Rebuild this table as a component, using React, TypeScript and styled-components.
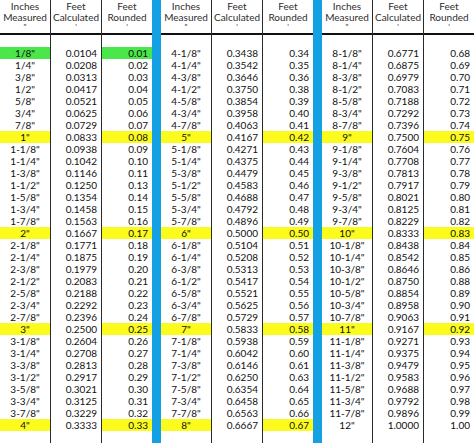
import { FunctionComponent } from 'react';
import styled, { createGlobalStyle } from 'styled-components';

const GlobalStyle = createGlobalStyle`
  html, body {
    margin: 0;
    padding: 0;
    background: #ffffff;
  }
  body {
    font-family: Lato, 'Liberation Sans', sans-serif;
  }
`;

const Sheet = styled.div`
  display: flex;
  width: 474px;
  height: 443px;
  overflow: hidden;
  background: #ffffff;
`;

const Group = styled.div`
  display: flex;
  width: 152px;
  flex-shrink: 0;
`;

const Divider = styled.div`
  width: 9px;
  flex-shrink: 0;
  background: #14a1e3;
`;

const Column = styled.div<{ $w: number; $last?: boolean }>`
  display: flex;
  flex-direction: column;
  box-sizing: border-box;
  width: ${(p) => p.$w}px;
  border-right: ${(p) => (p.$last ? 'none' : '1px solid #2a2a2a')};
`;

const HeaderCell = styled.div`
  height: 35px;
  box-sizing: border-box;
  padding-top: 1px;
  border-bottom: 2px solid #111;
  text-align: center;
  color: #2e2e2e;
  font-size: 10px;
  line-height: 11px;
`;

const Mark = styled.div`
  font-size: 8px;
  line-height: 9px;
`;

const Spacer = styled.div`
  height: 12px;
`;

const Cell = styled.div<{ $align: 'center' | 'right'; $fill?: string }>`
  height: 12px;
  line-height: 12px;
  font-size: 10px;
  color: #111;
  text-align: ${(p) => p.$align};
  padding-right: ${(p) => (p.$align === 'right' ? '4px' : '0')};
  background: ${(p) => p.$fill || 'transparent'};
  white-space: nowrap;
`;

const Filler = styled.div`
  flex: 1;
`;

const FRACS = ['', '1/8', '1/4', '3/8', '1/2', '5/8', '3/4', '7/8'];

type Row = { label: string; calc: string; rounded: string; fill?: string };

const buildRows = (g: number): Row[] => {
  const rows: Row[] = [];
  for (let i = 1; i <= 32; i++) {
    const eighths = g * 32 + i;
    const whole = Math.floor(eighths / 8);
    const frac = eighths % 8;
    let label = '';
    if (frac === 0) label = `${whole}"`;
    else if (whole === 0) label = `${FRACS[frac]}"`;
    else label = `${whole}-${FRACS[frac]}"`;
    const calc = (Math.round((eighths * 10000) / 96 + 1e-7) / 10000).toFixed(4);
    const rounded = (Math.round((eighths * 100) / 96 + 1e-7) / 100).toFixed(2);
    let fill: string | undefined;
    if (eighths === 1) fill = '#4ae64a';
    else if (frac === 0 && whole < 12) fill = '#fbfb1e';
    rows.push({ label, calc, rounded, fill });
  }
  return rows;
};

const Header: FunctionComponent<{ top: string; mid: string; mark: string }> = ({ top, mid, mark }) => (
  <HeaderCell>
    <div>{top}</div>
    <div>{mid}</div>
    <Mark>{mark}</Mark>
  </HeaderCell>
);

const TableGroup: FunctionComponent<{ g: number }> = ({ g }) => {
  const rows = buildRows(g);
  return (
    <Group>
      <Column $w={51}>
        <Header top="Inches" mid="Measured" mark={'"'} />
        <Spacer />
        {rows.map((r) => (
          <Cell key={r.label} $align="center" $fill={r.fill}>
            {r.label}
          </Cell>
        ))}
        <Filler />
      </Column>
      <Column $w={51}>
        <Header top="Feet" mid="Calculated" mark="'" />
        <Spacer />
        {rows.map((r) => (
          <Cell key={r.label} $align="right">
            {r.calc}
          </Cell>
        ))}
        <Filler />
      </Column>
      <Column $w={50} $last>
        <Header top="Feet" mid="Rounded" mark="'" />
        <Spacer />
        {rows.map((r) => (
          <Cell key={r.label} $align="right" $fill={r.fill}>
            {r.rounded}
          </Cell>
        ))}
        <Filler />
      </Column>
    </Group>
  );
};

const App: FunctionComponent = () => {
  return (
    <>
      <GlobalStyle />
      <Sheet>
        <TableGroup g={0} />
        <Divider />
        <TableGroup g={1} />
        <Divider />
        <TableGroup g={2} />
      </Sheet>
    </>
  );
};

export default App;
